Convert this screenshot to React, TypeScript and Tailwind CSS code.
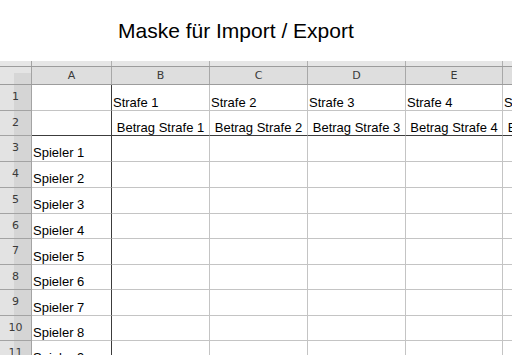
import React from "react";

const colW = ["w-[80px]", "w-[98px]", "w-[98px]", "w-[98px]", "w-[97px]", "w-[98px]"];
const letters = ["A", "B", "C", "D", "E", "F"];

type RowDef = { h: string; cells: string[]; dark?: boolean; center?: boolean; pb?: string };

const rows: RowDef[] = [
  { h: "h-[26px]", cells: ["", "Strafe 1", "Strafe 2", "Strafe 3", "Strafe 4", "Strafe 5"] },
  {
    h: "h-[25px]",
    cells: ["", "Betrag Strafe 1", "Betrag Strafe 2", "Betrag Strafe 3", "Betrag Strafe 4", "Betrag Strafe 5"],
    dark: true,
    center: true,
  },
  { h: "h-[26px]", cells: ["Spieler 1", "", "", "", "", ""], pb: "pb-[1px]" },
  { h: "h-[26px]", cells: ["Spieler 2", "", "", "", "", ""], pb: "pb-[1px]" },
  { h: "h-[26px]", cells: ["Spieler 3", "", "", "", "", ""], pb: "pb-[1px]" },
  { h: "h-[25px]", cells: ["Spieler 4", "", "", "", "", ""] },
  { h: "h-[26px]", cells: ["Spieler 5", "", "", "", "", ""] },
  { h: "h-[25px]", cells: ["Spieler 6", "", "", "", "", ""] },
  { h: "h-[26px]", cells: ["Spieler 7", "", "", "", "", ""] },
  { h: "h-[25px]", cells: ["Spieler 8", "", "", "", "", ""] },
  { h: "h-[25px]", cells: ["Spieler 9", "", "", "", "", ""] },
];

export default function App() {
  return (
    <div className="w-[512px] h-[355px] overflow-hidden bg-white text-black font-['Liberation_Sans',Arial,sans-serif]">
      <div className="h-[61px] pl-[118px] pt-[20px] text-[21px] leading-[21px] whitespace-nowrap">
        Maske für Import / Export
      </div>

      {/* top strip of the column header */}
      <div className="flex h-[5px] w-max bg-[#e6e6e6]">
        <div className="w-[32px] shrink-0 border-r border-[#a3a3a3]" />
        {colW.map((w, i) => (
          <div key={i} className={`${w} shrink-0 border-r border-[#b0b0b0]`} />
        ))}
      </div>

      {/* column header */}
      <div className="flex h-[19px] w-max border-y border-[#9c9c9c] bg-[#dedede] font-['DejaVu_Sans',sans-serif] text-[11px] leading-[17px] text-[#3a3a3a]">
        <div className="w-[32px] shrink-0 border-r border-[#a3a3a3] bg-[linear-gradient(to_right,#e4e4e4_14px,transparent_14px),linear-gradient(to_bottom,#e4e4e4_6px,#d6d6d6_6px)]" />
        {colW.map((w, i) => (
          <div key={i} className={`${w} shrink-0 border-r border-[#a8a8a8] flex justify-center`}>
            {letters[i]}
          </div>
        ))}
      </div>

      {rows.map((r, ri) => (
        <div key={ri} className={`flex w-max ${r.h}`}>
          <div className="w-[32px] shrink-0 border-r border-b border-[#a3a3a3] bg-[linear-gradient(to_right,#e3e3e3_14px,#d5d5d5_14px)] flex items-center justify-center font-['DejaVu_Sans',sans-serif] text-[11px] text-[#3a3a3a]">
            {ri + 1}
          </div>
          {r.cells.map((c, ci) => (
            <div
              key={ci}
              className={`${colW[ci]} shrink-0 border-r border-b overflow-hidden whitespace-nowrap flex items-end text-[13px] leading-[15px] ${
                ci === 0 ? "border-r-[#3c3c3c]" : "border-r-[#c4c4c4]"
              } ${r.dark ? "border-b-[#3c3c3c]" : "border-b-[#c4c4c4]"} ${
                r.center ? "justify-center" : "pl-[1px]"
              } ${r.pb ?? ""}`}
            >
              {c}
            </div>
          ))}
        </div>
      ))}
    </div>
  );
}
